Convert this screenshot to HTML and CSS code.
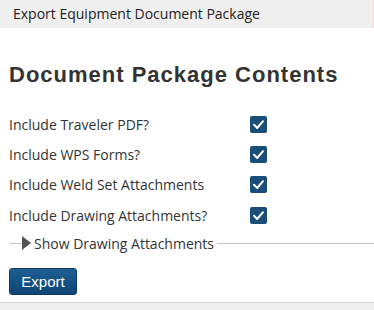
FILE: index.html
```html
<!DOCTYPE html>
<html lang="en">
<head>
  <meta charset="UTF-8" />
  <title>Export Equipment Document Package</title>
  <link rel="stylesheet" href="styles.css">
</head>
<body>
  <div class="dialog-header">Export Equipment Document Package</div>

  <div class="dialog-body">
    <h2 class="section-title">Document Package Contents</h2>

    <div class="option-list">
      <label class="option-row">
        <span class="option-label">Include Traveler PDF?</span>
        <span class="check"><svg viewBox="0 0 17 17"><path d="M4 8.8 L7.2 12 L13 5.2" /></svg></span>
      </label>
      <label class="option-row">
        <span class="option-label">Include WPS Forms?</span>
        <span class="check"><svg viewBox="0 0 17 17"><path d="M4 8.8 L7.2 12 L13 5.2" /></svg></span>
      </label>
      <label class="option-row">
        <span class="option-label">Include Weld Set Attachments</span>
        <span class="check"><svg viewBox="0 0 17 17"><path d="M4 8.8 L7.2 12 L13 5.2" /></svg></span>
      </label>
      <label class="option-row">
        <span class="option-label">Include Drawing Attachments?</span>
        <span class="check"><svg viewBox="0 0 17 17"><path d="M4 8.8 L7.2 12 L13 5.2" /></svg></span>
      </label>
    </div>

    <div class="collapse-row">
      <span class="rule short"></span>
      <span class="caret"></span>
      <span class="collapse-label">Show Drawing Attachments</span>
      <span class="rule long"></span>
    </div>

    <button class="export-btn">Export</button>
  </div>

  <div class="dialog-footer"></div>
</body>
</html>
```

FILE: styles.css
```css
html, body {
  margin: 0;
  padding: 0;
  height: 100%;
  overflow: hidden;
  background: #fff;
  font-family: 'Open Sans', sans-serif;
  color: #333;
}

body {
  display: flex;
  flex-direction: column;
}

.dialog-header {
  height: 28px;
  line-height: 27px;
  background: #efefef;
  padding-left: 13px;
  font-size: 14px;
  color: #222;
  border-right: 1px solid #f6d6d6;
}

.dialog-body {
  flex: 1;
  padding: 0 0 0 9px;
}

.section-title {
  margin: 35px 0 22px 0;
  font-family: 'Liberation Sans', Arial, sans-serif;
  font-weight: bold;
  font-size: 22px;
  letter-spacing: 1px;
  line-height: 24px;
  color: #333;
}

.option-list {
  display: flex;
  flex-direction: column;
}

.option-row {
  display: flex;
  align-items: center;
  height: 30.3px;
}

.option-label {
  width: 241px;
  font-size: 14px;
}

.check {
  width: 17px;
  height: 17px;
  background: #1b4d79;
  border-radius: 2px;
  display: flex;
}

.check svg {
  width: 17px;
  height: 17px;
}

.check path {
  fill: none;
  stroke: #fff;
  stroke-width: 2;
  stroke-linecap: round;
  stroke-linejoin: round;
}

.collapse-row {
  display: flex;
  align-items: center;
  height: 26px;
  margin-left: 1px;
}

.rule {
  height: 1px;
  background: #c4c4c4;
}

.rule.short {
  width: 12px;
}

.rule.long {
  flex: 1;
  margin-left: 3px;
}

.caret {
  width: 0;
  height: 0;
  border-top: 7px solid transparent;
  border-bottom: 7px solid transparent;
  border-left: 9px solid #555;
}

.collapse-label {
  font-size: 14px;
  margin-left: 3px;
}

.export-btn {
  margin-top: 12px;
  width: 68px;
  height: 27px;
  border: 1px solid #0d3a63;
  border-radius: 3px;
  background: linear-gradient(#1d5f95, #0f4574);
  color: #fff;
  font-family: 'Liberation Sans', Arial, sans-serif;
  font-size: 15px;
  padding: 0;
}

.dialog-footer {
  height: 7px;
  background: #efefef;
  border-top: 1px solid #d4d4d4;
}
```
